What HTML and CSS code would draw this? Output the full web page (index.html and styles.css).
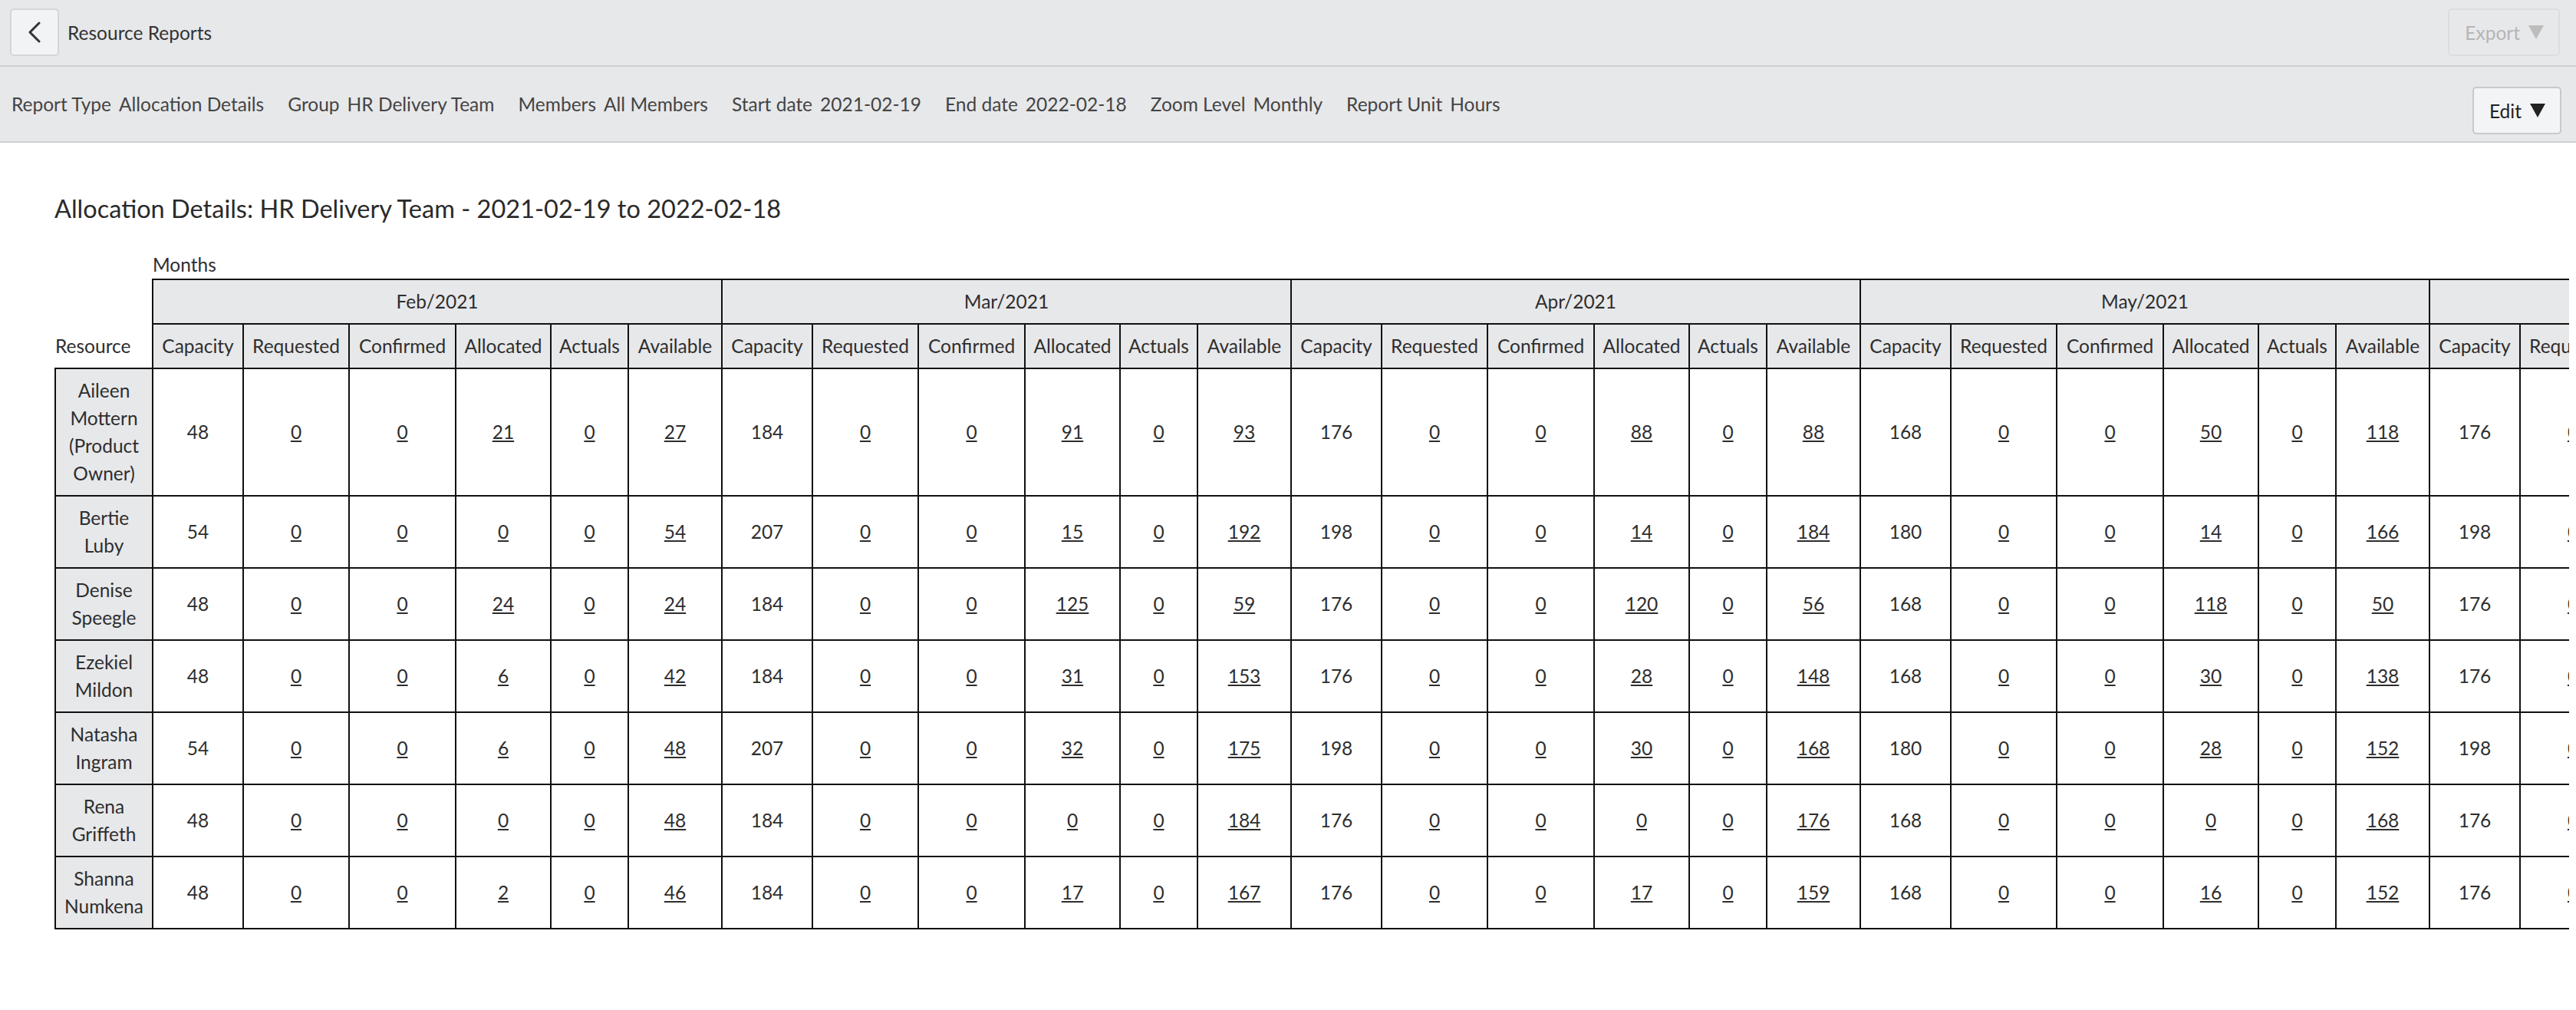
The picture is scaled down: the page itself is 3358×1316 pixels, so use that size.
FILE: index.html
```html
<!DOCTYPE html>
<html lang="en">
<head>
    <meta charset="UTF-8">
    <meta name="viewport" content="width=device-width, initial-scale=1.0">
    <title>Resource Reports</title>
    <link rel="stylesheet" href="styles.css">
</head>
<body>
    <!-- top bar -->
    <div class="topbar">
        <button class="back-btn" title="Back">
            <svg width="18" height="28" viewBox="0 0 18 28"><path d="M15 2 L3 14 L15 26" fill="none" stroke="#333" stroke-width="3" stroke-linecap="round" stroke-linejoin="round"/></svg>
        </button>
        <div class="page-title">Resource Reports</div>
        <button class="btn btn-export" disabled>Export
            <svg class="caret" width="20" height="18" viewBox="0 0 20 18"><polygon points="0,0 20,0 10,18" /></svg>
        </button>
    </div>

    <!-- report filters -->
    <div class="filters">
        <div class="filter-list">
            <div class="filter-item"><span class="label">Report Type</span>Allocation Details</div>
            <div class="filter-item"><span class="label">Group</span>HR Delivery Team</div>
            <div class="filter-item"><span class="label">Members</span>All Members</div>
            <div class="filter-item"><span class="label">Start date</span>2021-02-19</div>
            <div class="filter-item"><span class="label">End date</span>2022-02-18</div>
            <div class="filter-item"><span class="label">Zoom Level</span>Monthly</div>
            <div class="filter-item"><span class="label">Report Unit</span>Hours</div>
        </div>
        <button class="btn btn-edit">Edit
            <svg class="caret" width="20" height="18" viewBox="0 0 20 18"><polygon points="0,0 20,0 10,18" /></svg>
        </button>
    </div>

    <!-- report -->
    <div class="report">
        <h1 class="report-title">Allocation Details: HR Delivery Team - 2021-02-19 to 2022-02-18</h1>
        <div class="table-wrap">
            <table class="alloc" id="alloc"></table>
        </div>
    </div>

    <script>
        const months = ['Feb/2021', 'Mar/2021', 'Apr/2021', 'May/2021', 'Jun/2021'];
        const fields = ['Capacity', 'Requested', 'Confirmed', 'Allocated', 'Actuals', 'Available'];
        const colClass = ['cap', 'req', 'con', 'all', 'act', 'ava'];

        // capacity, requested, confirmed, allocated, actuals, available per month
        const people = [
            { name: 'Aileen Mottern (Product Owner)', data: [[48,0,0,21,0,27],[184,0,0,91,0,93],[176,0,0,88,0,88],[168,0,0,50,0,118],[176,0,0,40,0,136]] },
            { name: 'Bertie Luby', data: [[54,0,0,0,0,54],[207,0,0,15,0,192],[198,0,0,14,0,184],[180,0,0,14,0,166],[198,0,0,12,0,186]] },
            { name: 'Denise Speegle', data: [[48,0,0,24,0,24],[184,0,0,125,0,59],[176,0,0,120,0,56],[168,0,0,118,0,50],[176,0,0,96,0,80]] },
            { name: 'Ezekiel Mildon', data: [[48,0,0,6,0,42],[184,0,0,31,0,153],[176,0,0,28,0,148],[168,0,0,30,0,138],[176,0,0,24,0,152]] },
            { name: 'Natasha Ingram', data: [[54,0,0,6,0,48],[207,0,0,32,0,175],[198,0,0,30,0,168],[180,0,0,28,0,152],[198,0,0,26,0,172]] },
            { name: 'Rena Griffeth', data: [[48,0,0,0,0,48],[184,0,0,0,0,184],[176,0,0,0,0,176],[168,0,0,0,0,168],[176,0,0,0,0,176]] },
            { name: 'Shanna Numkena', data: [[48,0,0,2,0,46],[184,0,0,17,0,167],[176,0,0,17,0,159],[168,0,0,16,0,152],[176,0,0,14,0,162]] }
        ];

        function buildTable() {
            const table = document.getElementById('alloc');
            let html = '<colgroup><col class="col-res">';
            months.forEach(() => {
                colClass.forEach(c => { html += `<col class="col-${c}">`; });
            });
            html += '</colgroup><thead>';

            html += `<tr><th class="blank"></th><th class="months-label" colspan="${months.length * 6}">Months</th></tr>`;

            html += '<tr><th class="blank"></th>';
            months.forEach(m => { html += `<th class="month" colspan="6">${m}</th>`; });
            html += '</tr>';

            html += '<tr><th class="resource-head">Resource</th>';
            months.forEach(() => {
                fields.forEach(f => { html += `<th class="field">${f}</th>`; });
            });
            html += '</tr></thead><tbody>';

            people.forEach(p => {
                html += `<tr><th class="name">${p.name}</th>`;
                p.data.forEach(vals => {
                    vals.forEach((v, i) => {
                        html += i === 0 ? `<td>${v}</td>` : `<td><a href="#">${v}</a></td>`;
                    });
                });
                html += '</tr>';
            });

            html += '</tbody>';
            table.innerHTML = html;
        }

        buildTable();
    </script>
</body>
</html>
```

FILE: styles.css
```css
body {
    margin: 0;
    font-family: Lato, "Liberation Sans", sans-serif;
    font-size: 24.5px;
    color: #2e2e2e;
    background-color: #ffffff;
}
button {
    font: inherit;
    cursor: pointer;
}

/* top bar */
.topbar {
    display: flex;
    align-items: center;
    background-color: #e7e8ea;
    padding: 11px 21px 12px 13px;
    border-bottom: 2px solid #cfd0d2;
}
.back-btn {
    width: 64px;
    height: 62px;
    box-sizing: border-box;
    display: flex;
    align-items: center;
    justify-content: center;
    padding: 0;
    background-color: #f2f3f5;
    border: 2px solid #d5d6d8;
    border-radius: 5px;
}
.page-title {
    flex: 1;
    margin-left: 11px;
    color: #333333;
}
.btn {
    height: 62px;
    box-sizing: border-box;
    display: flex;
    align-items: center;
    gap: 11px;
    padding: 0 19px 0 20px;
    border-radius: 5px;
}
.btn-export {
    background-color: #e7e8ea;
    border: 2px solid #dcdde0;
    color: #b5b5b5;
    cursor: default;
}
.btn-export .caret {
    fill: #bdbdbd;
}
.btn-edit {
    background-color: #f3f4f6;
    border: 2px solid #c8c9cb;
    color: #222222;
}
.btn-edit .caret {
    fill: #222222;
}

/* filters */
.filters {
    display: flex;
    align-items: flex-start;
    background-color: #e7e8ea;
    padding: 26px 19px 9px 15px;
    border-bottom: 2px solid #cfd0d2;
}
.filter-list {
    flex: 1;
    display: flex;
    gap: 31px;
    margin-top: 5px;
    line-height: 36px;
    color: #444444;
}
.filter-item .label {
    margin-right: 10px;
}

/* report */
.report {
    padding: 66px 9px 0 69px;
}
.report-title {
    margin: 0 0 35px 2px;
    font-size: 32.5px;
    font-weight: 400;
    line-height: 40px;
    color: #2a2a2a;
}
.table-wrap {
    overflow: hidden;
    padding: 0 0 2px 2px;
}
.alloc {
    table-layout: fixed;
    width: 3837px;
    border-collapse: collapse;
    line-height: 36px;
}
.alloc th,
.alloc td {
    border: 2px solid #111111;
    padding: 10px 6px;
    text-align: center;
    font-weight: 400;
    white-space: nowrap;
}
.alloc .month,
.alloc .field,
.alloc .name {
    background-color: #e7e8ea;
}
.alloc .name {
    white-space: normal;
}
.alloc .blank,
.alloc .months-label,
.alloc .resource-head {
    border: none;
    background: none;
    padding: 0;
    text-align: left;
}
.alloc a {
    color: inherit;
    text-decoration: underline;
}
.col-res { width: 127px; }
.col-cap { width: 118px; }
.col-req { width: 138px; }
.col-con { width: 139px; }
.col-all { width: 124px; }
.col-act { width: 101px; }
.col-ava { width: 122px; }
```
